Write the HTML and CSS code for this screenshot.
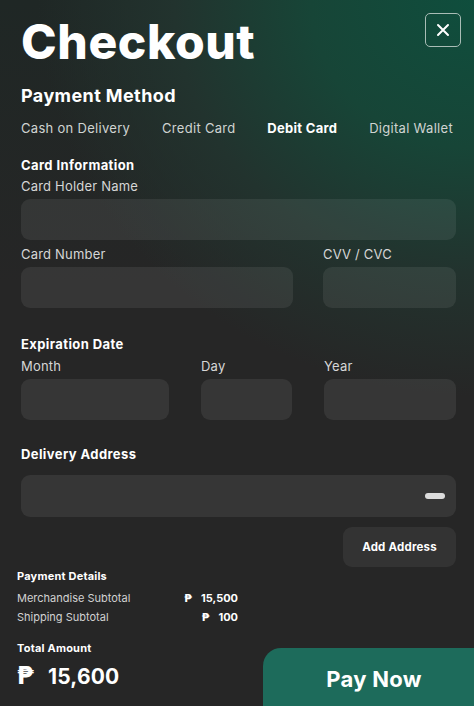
FILE: index.html
```html
<!DOCTYPE html>
<html lang="en">
<head>
<meta charset="utf-8">
<title>Checkout</title>
<link rel="stylesheet" href="styles.css">
</head>
<body>
<main class="checkout">
  <header class="top">
    <h1 class="title">Checkout</h1>
    <button class="close" aria-label="Close">
      <svg width="14" height="14" viewBox="0 0 14 14"><path d="M2 2 L12 12 M12 2 L2 12" stroke="#ffffff" stroke-width="2" stroke-linecap="round" fill="none"/></svg>
    </button>
  </header>

  <section class="method">
    <h2 class="method-title">Payment Method</h2>
    <nav class="tabs">
      <span class="tab">Cash on Delivery</span>
      <span class="tab">Credit Card</span>
      <span class="tab active">Debit Card</span>
      <span class="tab">Digital Wallet</span>
    </nav>
  </section>

  <section class="card-info">
    <h3 class="section-title">Card Information</h3>
    <label class="field">
      <span class="label">Card Holder Name</span>
      <span class="input"></span>
    </label>
    <div class="row row-card">
      <label class="field">
        <span class="label">Card Number</span>
        <span class="input"></span>
      </label>
      <label class="field">
        <span class="label">CVV / CVC</span>
        <span class="input"></span>
      </label>
    </div>
  </section>

  <section class="expiry">
    <h3 class="section-title">Expiration Date</h3>
    <div class="row row-date">
      <label class="field">
        <span class="label">Month</span>
        <span class="input"></span>
      </label>
      <label class="field">
        <span class="label">Day</span>
        <span class="input"></span>
      </label>
      <label class="field">
        <span class="label">Year</span>
        <span class="input"></span>
      </label>
    </div>
  </section>

  <section class="address">
    <h3 class="section-title">Delivery Address</h3>
    <div class="input input-address"><span class="pill"></span></div>
    <div class="address-actions">
      <button class="add-btn">Add Address</button>
    </div>
  </section>

  <footer class="summary">
    <div class="details">
      <h4 class="small-title">Payment Details</h4>
      <div class="line line-first"><span>Merchandise Subtotal</span><span class="amt"><span class="peso">₱</span>15,500</span></div>
      <div class="line"><span>Shipping Subtotal</span><span class="amt"><span class="peso">₱</span>100</span></div>
      <h4 class="small-title total-title">Total Amount</h4>
      <div class="total"><span class="peso-big">₱</span>15,600</div>
    </div>
    <button class="pay">Pay Now</button>
  </footer>
</main>
</body>
</html>
```

FILE: styles.css
```css
* { box-sizing: border-box; }

html, body {
  margin: 0;
  padding: 0;
  height: 100%;
}

body {
  font-family: Inter, "Noto Sans", "DejaVu Sans", sans-serif;
  color: #ffffff;
  background-color: #262626;
  background-image:
    radial-gradient(ellipse 115% 70% at 100% 0%, #0f4e3d 0%, #174537 30%, #22332e 55%, rgba(38,38,38,0) 80%),
    linear-gradient(180deg, #1f2725 0%, #262626 40%);
  overflow: hidden;
}

.checkout {
  width: 474px;
  height: 706px;
  display: flex;
  flex-direction: column;
}

.top, .method, .card-info, .expiry, .address {
  padding: 0 18px 0 21px;
}

.top {
  display: flex;
  justify-content: space-between;
  align-items: flex-start;
  padding-top: 13px;
}

.title {
  margin: 1px 0 0;
  font-size: 48px;
  line-height: 56px;
  font-weight: 800;
  letter-spacing: 0.6px;
}

.close {
  width: 36px;
  height: 34px;
  margin-right: -5px;
  border: 1px solid #a9bdb6;
  border-radius: 5px;
  background: transparent;
  display: flex;
  align-items: center;
  justify-content: center;
  padding: 0;
}

.method-title {
  margin: 15px 0 0;
  font-size: 18px;
  line-height: 22px;
  font-weight: 700;
  letter-spacing: 0.4px;
}

.tabs {
  margin-top: 13px;
  display: flex;
  justify-content: space-between;
  padding-right: 3px;
}

.tab {
  font-size: 13px;
  line-height: 16px;
  color: #d0d4d2;
  letter-spacing: 0.3px;
}

.tab.active {
  color: #ffffff;
  font-weight: 700;
}

.section-title {
  margin: 0;
  font-size: 13px;
  line-height: 16px;
  font-weight: 700;
  letter-spacing: 0.4px;
}

.card-info { margin-top: 21px; }
.expiry { margin-top: 28px; }
.address { margin-top: 26px; }

.field {
  display: flex;
  flex-direction: column;
  margin-top: 5px;
}

.label {
  font-size: 13px;
  line-height: 16px;
  color: #d6d6d6;
  margin-bottom: 5px;
  letter-spacing: 0.2px;
}

.input {
  display: block;
  height: 41px;
  border-radius: 9px;
  background: rgba(255, 255, 255, 0.075);
}

.row {
  display: grid;
  margin-top: 1px;
}

.row-card {
  grid-template-columns: 272px 1fr;
  column-gap: 30px;
}

.row-date {
  grid-template-columns: 148px 91px 1fr;
  column-gap: 32px;
}

.row-card .field, .row-date .field { margin-top: 5px; }

.input-address {
  margin-top: 13px;
  height: 42px;
  display: flex;
  align-items: center;
  justify-content: flex-end;
  padding-right: 11px;
}

.pill {
  width: 20px;
  height: 6px;
  border-radius: 3px;
  background: #dcdcdc;
}

.address-actions {
  display: flex;
  justify-content: flex-end;
  margin-top: 10px;
}

.add-btn {
  width: 113px;
  height: 40px;
  border: none;
  border-radius: 9px;
  background: #333333;
  color: #ffffff;
  font-family: inherit;
  font-size: 11.5px;
  font-weight: 700;
  letter-spacing: 0.2px;
  padding: 0;
}

.summary {
  margin-top: 2px;
  padding-left: 17px;
  display: flex;
  justify-content: space-between;
  align-items: flex-end;
  flex: 1;
}

.details {
  width: 221px;
  padding-bottom: 17px;
}

.small-title {
  margin: 0;
  font-size: 11px;
  line-height: 14px;
  font-weight: 700;
  letter-spacing: 0.2px;
}

.line {
  display: flex;
  justify-content: space-between;
  font-size: 11px;
  line-height: 14px;
  color: #d2d2d2;
  margin-top: 4px;
}

.line-first { margin-top: 8px; }

.amt {
  color: #ffffff;
  font-weight: 700;
}

.peso {
  font-family: "DejaVu Sans", sans-serif;
  margin-right: 9px;
}

.total-title { margin-top: 16px; }

.total {
  margin-top: 8px;
  font-size: 21px;
  line-height: 26px;
  font-weight: 700;
  letter-spacing: 0.2px;
}

.peso-big {
  font-family: "DejaVu Sans", sans-serif;
  font-size: 24px;
  margin-right: 14px;
}

.pay {
  width: 222px;
  height: 59px;
  margin-right: -11px;
  flex-shrink: 0;
  border: none;
  border-radius: 18px 0 0 0;
  background: #1d6b5b;
  color: #ffffff;
  font-family: inherit;
  font-size: 22px;
  font-weight: 700;
  letter-spacing: 0.3px;
  padding: 3px 0 0 0;
}
```
